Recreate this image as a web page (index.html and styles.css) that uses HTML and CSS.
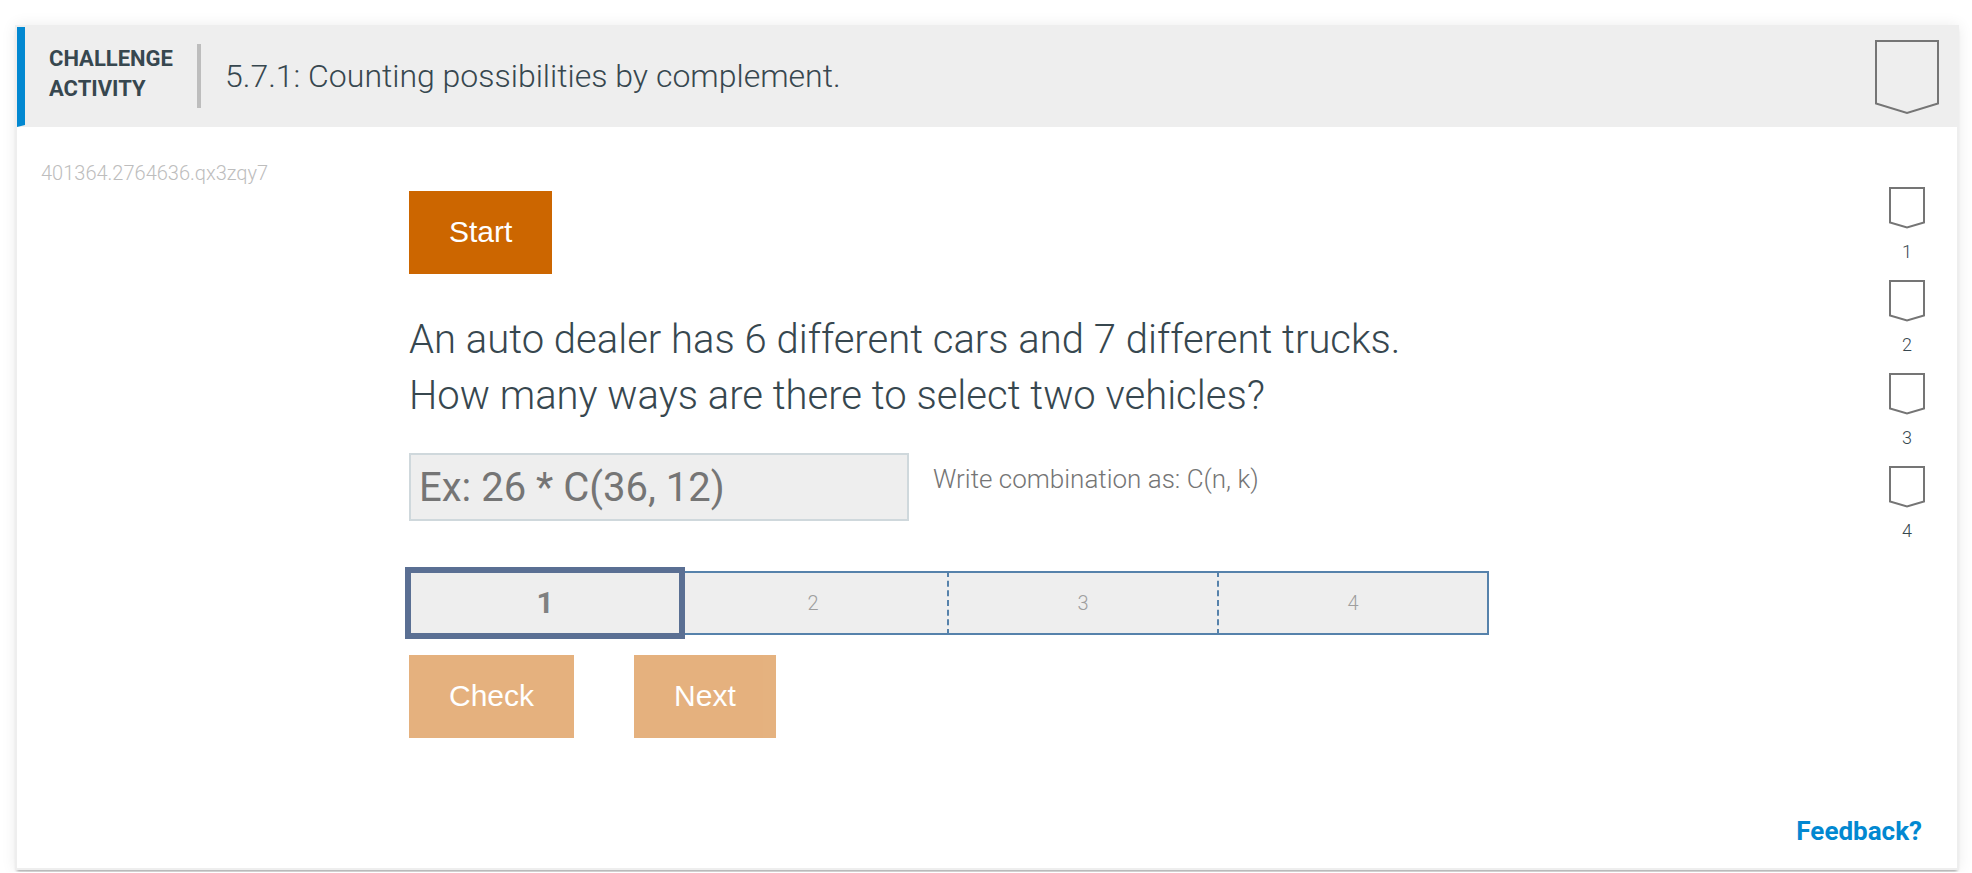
FILE: index.html
```
<!DOCTYPE html>
<html lang="en">
<head>
  <meta charset="UTF-8"/>
  <meta name="viewport" content="width=device-width, initial-scale=1.0"/>
  <title>5.7.1: Counting possibilities by complement.</title>
  <link rel="stylesheet" href="styles.css">
</head>
<body>
<main class="activity">
  <header class="activity-header">
    <div class="activity-type">CHALLENGE<br>ACTIVITY</div>
    <h1>5.7.1: Counting possibilities by complement.</h1>
    <svg class="badge-large" width="64" height="75" viewBox="0 0 64 75" role="img" aria-label="Activity not completed">
      <path d="M1 1H63V63.500L32 73L1 63.500Z"/>
    </svg>
  </header>

  <div class="activity-body">
    <section class="tool">
      <div class="activity-id">401364.2764636.qx3zqy7</div>

      <div class="question">
        <button class="start">Start</button>

        <p class="prompt">An auto dealer has 6 different cars and 7 different trucks.<br>How many ways are there to select two vehicles?</p>

        <div class="answer">
          <input id="answer" type="text" placeholder="Ex: 26 * C(36, 12)" disabled>
          <label for="answer">Write combination as: C(n, k)</label>
        </div>

        <!-- Level progress -->
        <div class="steps">
          <div class="step current">1</div>
          <div class="step">2</div>
          <div class="step">3</div>
          <div class="step">4</div>
        </div>

        <div class="actions">
          <button disabled>Check</button>
          <button disabled>Next</button>
        </div>
      </div>
    </section>

    <aside class="levels">
      <div class="level">
        <svg width="36" height="42" viewBox="0 0 36 42" aria-hidden="true"><path d="M1 1H35V35.500L18 40.500L1 35.500Z"/></svg>
        <span>1</span>
      </div>
      <div class="level">
        <svg width="36" height="42" viewBox="0 0 36 42" aria-hidden="true"><path d="M1 1H35V35.500L18 40.500L1 35.500Z"/></svg>
        <span>2</span>
      </div>
      <div class="level">
        <svg width="36" height="42" viewBox="0 0 36 42" aria-hidden="true"><path d="M1 1H35V35.500L18 40.500L1 35.500Z"/></svg>
        <span>3</span>
      </div>
      <div class="level">
        <svg width="36" height="42" viewBox="0 0 36 42" aria-hidden="true"><path d="M1 1H35V35.500L18 40.500L1 35.500Z"/></svg>
        <span>4</span>
      </div>
    </aside>
  </div>

  <footer>
    <a href="#feedback">Feedback?</a>
  </footer>
</main>
</body>
</html>
```
FILE: styles.css
```
* {
  box-sizing: border-box;
}

body {
  font-family: Roboto, sans-serif;
  font-weight: 300;
  margin: 0;
  padding: 25px 13px 2px 15px;
  background: #fff;
  color: #37474f;
}

.activity {
  border: 2px solid #eee;
  box-shadow: 0 3px 3px -2px rgba(0,0,0,0.4), 0 0 14px rgba(0,0,0,0.08);
}

.activity-header {
  display: flex;
  align-items: center;
  height: 100px;
  padding-right: 18px;
  background: #eee;
  border-left: 8px solid #0288d1;
  border-bottom: 2px solid #eee;
}

.activity-type {
  width: 176px;
  height: 64px;
  padding-left: 24px;
  border-right: 4px solid #bdbdbd;
  font-size: 22px;
  font-weight: 700;
  line-height: 30px;
}

h1 {
  flex: 1;
  margin: 0;
  padding-left: 24px;
  font-size: 32px;
  font-weight: 300;
}

svg {
  display: block;
  fill: none;
  stroke: #757575;
  stroke-width: 2;
}

.badge-large {
  margin-top: 2px;
}

.activity-body {
  display: flex;
}

.tool {
  flex: 1;
  padding: 32px 0 0 24px;
}

.activity-id {
  height: 32px;
  font-size: 20px;
  line-height: 28px;
  color: #bdbdbd;
}

.question {
  max-width: 1080px;
  margin: 0 auto;
}

button {
  height: 83px;
  padding: 0 40px 2px;
  border: none;
  background: #cc6600;
  color: #fff;
  font-family: "Liberation Sans", Arial, sans-serif;
  font-size: 30px;
  cursor: pointer;
}

button:disabled {
  opacity: 0.5;
  cursor: default;
}

.start {
  display: block;
}

.prompt {
  margin: 38px 0 29px;
  font-size: 40px;
  line-height: 56px;
}

.answer {
  display: flex;
  gap: 24px;
}

.answer input {
  width: 500px;
  height: 68px;
  padding: 0 8px;
  border: 2px solid #cfd8dc;
  background: #eee;
  font-family: inherit;
  font-size: 40px;
}

.answer input::placeholder {
  color: #757575;
}

.answer label {
  padding-top: 8px;
  font-size: 26px;
  line-height: 36px;
  color: #757575;
}

.steps {
  display: grid;
  grid-template-columns: repeat(4, 1fr);
  height: 64px;
  margin: 50px 0 20px;
  background: #eee;
}

.step {
  display: flex;
  align-items: center;
  justify-content: center;
  border: 2px solid #5682ab;
  border-left: none;
  border-right-style: dashed;
  font-size: 20px;
  color: #9e9e9e;
}

.step:last-child {
  border-right-style: solid;
}

/* the active step grows over its neighbours */
.step.current {
  margin: -4px -6px -4px -4px;
  padding-bottom: 2px;
  border: 6px solid #5a6f93;
  background: #eee;
  z-index: 1;
  font-size: 30px;
  font-weight: 700;
  color: #808080;
}

.actions {
  display: flex;
  gap: 60px;
}

.levels {
  display: flex;
  flex-direction: column;
  gap: 14px;
  width: 100px;
  padding-top: 60px;
}

.level {
  display: flex;
  flex-direction: column;
  align-items: center;
  gap: 8px;
  font-size: 18px;
  line-height: 29px;
}

footer {
  padding: 75px 35px 19px;
  text-align: right;
}

footer a {
  font-size: 26px;
  font-weight: 700;
  line-height: 36px;
  color: #0288d1;
  text-decoration: none;
}
```
